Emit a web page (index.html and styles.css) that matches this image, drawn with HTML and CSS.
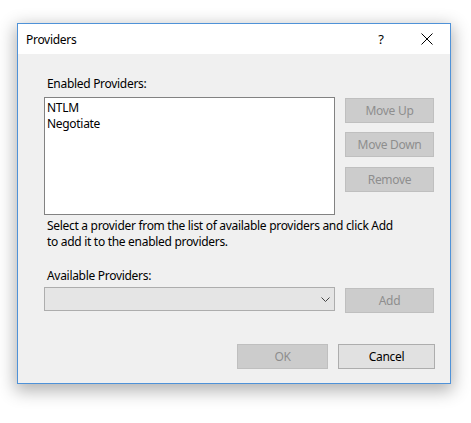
FILE: index.html
```html
<!DOCTYPE html>
<html>
    <head>
        <title>Providers</title>
        <link rel="stylesheet" href="styles.css">
    </head>
    <body>
        <div class="dialog">
            <div class="titlebar">
                <span class="title">Providers</span>
                <span class="help">?</span>
                <span class="close">
                    <svg width="12" height="12" viewBox="0 0 12 12"><path d="M0.5 0.5 L11.5 11.5 M11.5 0.5 L0.5 11.5" stroke="#000" stroke-width="1" fill="none"/></svg>
                </span>
            </div>
            <div class="content">
                <div class="label">Enabled Providers:</div>
                <div class="row">
                    <div class="listbox">
                        <div class="item">NTLM</div>
                        <div class="item">Negotiate</div>
                    </div>
                    <div class="side">
                        <button type="button" class="btn btn_off" disabled>Move Up</button>
                        <button type="button" class="btn btn_off btn_mid" disabled>Move Down</button>
                        <button type="button" class="btn btn_off btn_last" disabled>Remove</button>
                    </div>
                </div>
                <p class="hint">Select a provider from the list of available providers and click Add<br>to add it to the enabled providers.</p>
                <div class="label label2">Available Providers:</div>
                <div class="row">
                    <div class="combo">
                        <svg class="chevron" width="9" height="5" viewBox="0 0 9 5"><path d="M0.5 0.5 L4.5 4.5 L8.5 0.5" stroke="#444" stroke-width="1" fill="none"/></svg>
                    </div>
                    <button type="button" class="btn btn_off btn_add" disabled>Add</button>
                </div>
                <div class="footer">
                    <button type="button" class="btn btn_off btn_ok" disabled>OK</button>
                    <button type="button" class="btn btn_cancel">Cancel</button>
                </div>
            </div>
        </div>
    </body>
</html>
```

FILE: styles.css
```css
html {
	background: #ffffff;
}
body {
	margin: 0;
	padding: 23px 0 0 17px;
	min-height: 423px;
	box-sizing: border-box;
	background: #ffffff;
	font-family: "Noto Sans", "Open Sans", sans-serif;
	font-size: 12px;
	letter-spacing: -0.3px;
	color: #000000;
}
.dialog {
	width: 432px;
	height: 359px;
	border: 1px solid #4f92d8;
	background: #f0f0f0;
	box-shadow: 0 5px 16px 2px rgba(0, 0, 0, 0.3);
}
.titlebar {
	display: flex;
	align-items: center;
	height: 30px;
	background: #ffffff;
	padding: 0 0 0 8px;
}
.title {
	flex: 1;
	line-height: 16px;
	padding-top: 1px;
}
.help {
	width: 46px;
	text-align: center;
	font-size: 13px;
	line-height: 16px;
	padding-left: 1px;
}
.close {
	width: 46px;
	display: flex;
	justify-content: center;
}
.content {
	padding: 22px 0 0 26px;
}
.label {
	line-height: 16px;
	padding-left: 3px;
	margin-bottom: 5px;
}
.label2 {
	margin-top: 18px;
	margin-bottom: 3px;
}
.row {
	display: flex;
	gap: 10px;
}
.listbox {
	width: 289px;
	height: 116px;
	border: 1px solid #828282;
	background: #ffffff;
}
.item {
	line-height: 16px;
	padding-left: 2px;
}
.listbox .item:first-child {
	margin-top: 2px;
}
.side {
	display: flex;
	flex-direction: column;
	padding-top: 1px;
}
.btn {
	font-family: inherit;
	font-size: 12px;
	letter-spacing: -0.3px;
	width: 89px;
	height: 25px;
	padding: 0;
	margin: 0;
	box-sizing: border-box;
}
.btn_off {
	background: #cccccc;
	border: 1px solid #bfbfbf;
	color: #8e8e8e;
}
.btn_mid {
	margin-top: 9px;
}
.btn_last {
	margin-top: 10px;
}
.hint {
	margin: 3px 0 0 3px;
	line-height: 16px;
}
.combo {
	width: 291px;
	height: 24px;
	box-sizing: border-box;
	border: 1px solid #adadad;
	background: #e5e5e5;
	display: flex;
	align-items: center;
	justify-content: flex-end;
	padding-right: 4px;
}
.btn_add {
	margin-top: 1px;
}
.footer {
	display: flex;
	justify-content: flex-end;
	gap: 10px;
	margin: 31px 15px 0 0;
}
.btn_ok {
	width: 91px;
}
.btn_cancel {
	width: 97px;
	background: #e1e1e1;
	border: 1px solid #adadad;
	color: #000000;
}
```
